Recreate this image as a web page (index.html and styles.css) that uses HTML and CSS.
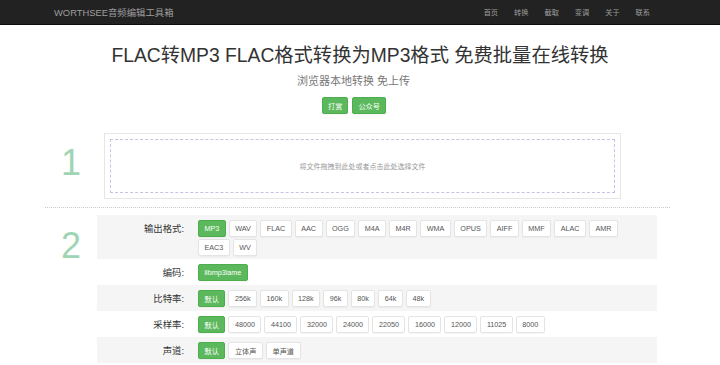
FILE: index.html
```html
<!DOCTYPE html>
<html>
<head>
<meta charset="utf-8">
<title>FLAC转MP3 - WORTHSEE音频编辑工具箱</title>
<link rel="stylesheet" href="styles.css">
</head>
<body>

	<div class="navbar">
		<div class="container nav-inner">
			<span class="brand">WORTHSEE音频编辑工具箱</span>
			<ul class="nav">
				<li>首页</li>
				<li>转换</li>
				<li>截取</li>
				<li>变调</li>
				<li>关于</li>
				<li>联系</li>
			</ul>
		</div>
	</div>

	<div class="container">
		<h1 class="title">FLAC转MP3 FLAC格式转换为MP3格式 免费批量在线转换</h1>
		<p class="subtitle">浏览器本地转换 免上传</p>
		<div class="top-buttons">
			<span class="btn btn-green">打赏</span>
			<span class="btn btn-green">公众号</span>
		</div>

		<div class="step step1">
			<div class="step-num">1</div>
			<div class="drop-outer">
				<div class="drop-inner">将文件拖拽到此处或者点击此处选择文件</div>
			</div>
		</div>

		<div class="step step2">
			<div class="step-num">2</div>
			<div class="options">
				<div class="opt-row gray">
					<div class="opt-label">输出格式:</div>
					<div class="opt-values">
						<span class="btn btn-green">MP3</span>
						<span class="btn">WAV</span>
						<span class="btn">FLAC</span>
						<span class="btn">AAC</span>
						<span class="btn">OGG</span>
						<span class="btn">M4A</span>
						<span class="btn">M4R</span>
						<span class="btn">WMA</span>
						<span class="btn">OPUS</span>
						<span class="btn">AIFF</span>
						<span class="btn">MMF</span>
						<span class="btn">ALAC</span>
						<span class="btn">AMR</span>
						<span class="btn">EAC3</span>
						<span class="btn">WV</span>
					</div>
				</div>
				<div class="opt-row">
					<div class="opt-label">编码:</div>
					<div class="opt-values">
						<span class="btn btn-green">libmp3lame</span>
					</div>
				</div>
				<div class="opt-row gray">
					<div class="opt-label">比特率:</div>
					<div class="opt-values">
						<span class="btn btn-green">默认</span>
						<span class="btn">256k</span>
						<span class="btn">160k</span>
						<span class="btn">128k</span>
						<span class="btn">96k</span>
						<span class="btn">80k</span>
						<span class="btn">64k</span>
						<span class="btn">48k</span>
					</div>
				</div>
				<div class="opt-row">
					<div class="opt-label">采样率:</div>
					<div class="opt-values">
						<span class="btn btn-green">默认</span>
						<span class="btn">48000</span>
						<span class="btn">44100</span>
						<span class="btn">32000</span>
						<span class="btn">24000</span>
						<span class="btn">22050</span>
						<span class="btn">16000</span>
						<span class="btn">12000</span>
						<span class="btn">11025</span>
						<span class="btn">8000</span>
					</div>
				</div>
				<div class="opt-row gray">
					<div class="opt-label">声道:</div>
					<div class="opt-values">
						<span class="btn btn-green">默认</span>
						<span class="btn">立体声</span>
						<span class="btn">单声道</span>
					</div>
				</div>
			</div>
		</div>
	</div>

</body>
</html>
```

FILE: styles.css
```css
body
   {
   	margin			:  0 ;
   	font-family		:  "Liberation Sans", "Noto Sans CJK SC", sans-serif ;
   	color			:  #333333 ;
   	background		:  #ffffff ;
   	overflow		:  hidden ;
    }

.container
   {
   	width			:  630px ;
   	margin			:  0 auto ;
    }

/* top bar */
.navbar
   {
   	height			:  24px ;
   	background		:  #222222 ;
   	border-bottom		:  1px solid #0c0c0c ;
    }

.nav-inner
   {
   	display			:  flex ;
   	align-items		:  center ;
   	justify-content		:  space-between ;
   	height			:  24px ;
   	padding			:  0 17px 0 9px ;
   	box-sizing		:  border-box ;
    }

.brand
   {
   	font-size		:  9.4px ;
   	color			:  #9d9d9d ;
    }

.nav
   {
   	display			:  flex ;
   	margin			:  0 ;
   	padding			:  0 ;
   	list-style		:  none ;
    }

.nav li
   {
   	padding			:  0 8px ;
   	font-size		:  7.2px ;
   	color			:  #9d9d9d ;
    }

/* heading */
.title
   {
   	margin			:  18px 0 0 ;
   	font-size		:  19.3px ;
   	font-weight		:  normal ;
   	text-align		:  center ;
   	line-height		:  26px ;
    }

.subtitle
   {
   	margin			:  5px 0 0 ;
   	padding-right		:  13px ;
   	font-size		:  11px ;
   	line-height		:  14px ;
   	color			:  #777777 ;
   	text-align		:  center ;
    }

.top-buttons
   {
   	display			:  flex ;
   	justify-content		:  center ;
   	gap			:  4px ;
   	margin-top		:  9px ;
   	padding-right		:  12px ;
    }

.top-buttons .btn
   {
   	padding			:  0 5px ;
    }

/* buttons */
.btn
   {
   	display			:  inline-flex ;
   	align-items		:  center ;
   	height			:  17px ;
   	padding			:  0 5.5px ;
   	box-sizing		:  border-box ;
   	border			:  1px solid #e4e4e4 ;
   	border-radius		:  2px ;
   	background		:  #ffffff ;
   	box-shadow		:  0 1px 1px rgba(0, 0, 0, 0.04) ;
   	font-size		:  7.2px ;
   	color			:  #555555 ;
    }

.btn-green
   {
   	background		:  #5cb85c ;
   	border-color		:  #4cae4c ;
   	color			:  #ffffff ;
    }

/* steps */
.step
   {
   	display			:  flex ;
    }

.step-num
   {
   	width			:  52px ;
   	flex-shrink		:  0 ;
   	text-align		:  center ;
   	font-size		:  36px ;
   	color			:  #a0d5b4 ;
   	line-height		:  38px ;
    }

.step1
   {
   	margin-top		:  19px ;
   	padding-bottom		:  8px ;
   	border-bottom		:  1px dotted #c8c8c8 ;
   	width			:  625px ;
    }

.step1 .step-num
   {
   	padding-top		:  11px ;
    }

.drop-outer
   {
   	width			:  517px ;
   	margin-left		:  7px ;
   	padding			:  5px ;
   	box-sizing		:  border-box ;
   	border			:  1px solid #e6e6e6 ;
    }

.drop-inner
   {
   	height			:  52px ;
   	display			:  flex ;
   	align-items		:  center ;
   	justify-content		:  center ;
   	border			:  1px dashed #c4c4e2 ;
   	font-size		:  7px ;
   	color			:  #999999 ;
    }

.step2
   {
   	margin-top		:  7px ;
    }

.step2 .step-num
   {
   	padding-top		:  12px ;
    }

.options
   {
   	width			:  560px ;
    }

.opt-row
   {
   	display			:  flex ;
   	padding			:  5px 0 3px ;
    }

.opt-row.gray
   {
   	background		:  #f5f5f5 ;
    }

.opt-label
   {
   	width			:  87px ;
   	flex-shrink		:  0 ;
   	padding-right		:  14px ;
   	text-align		:  right ;
   	font-size		:  9.4px ;
   	line-height		:  17px ;
    }

.opt-values
   {
   	display			:  flex ;
   	flex-wrap		:  wrap ;
   	width			:  440px ;
   	min-height		:  18px ;
   	gap			:  2px 3px ;
    }
```
